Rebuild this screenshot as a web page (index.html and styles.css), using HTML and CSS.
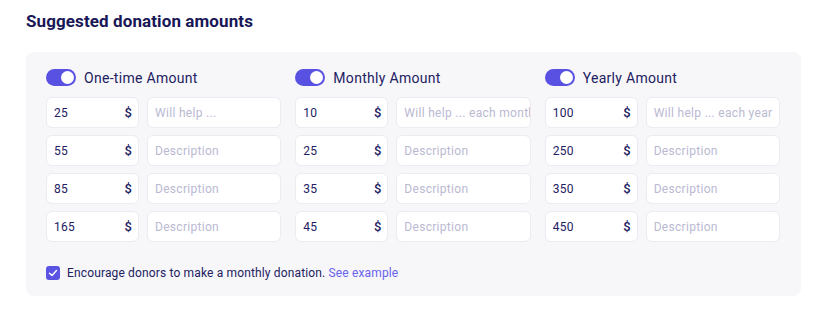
FILE: index.html
```html
<!DOCTYPE html>
<html>
<head>
<meta charset="utf-8">
<link rel="stylesheet" href="styles.css">
</head>
<body>
<div class="page">
  <h2 class="title">Suggested donation amounts</h2>
  <div class="panel">
    <div class="columns">
      <div class="col">
        <div class="col-head"><span class="toggle"><span class="knob"></span></span><span class="label">One-time Amount</span></div>
        <div class="row"><div class="amount"><span>25</span><span class="cur">$</span></div><div class="desc">Will help ...</div></div>
        <div class="row"><div class="amount"><span>55</span><span class="cur">$</span></div><div class="desc">Description</div></div>
        <div class="row"><div class="amount"><span>85</span><span class="cur">$</span></div><div class="desc">Description</div></div>
        <div class="row"><div class="amount"><span>165</span><span class="cur">$</span></div><div class="desc">Description</div></div>
      </div>
      <div class="col">
        <div class="col-head"><span class="toggle"><span class="knob"></span></span><span class="label">Monthly Amount</span></div>
        <div class="row"><div class="amount"><span>10</span><span class="cur">$</span></div><div class="desc">Will help ... each month</div></div>
        <div class="row"><div class="amount"><span>25</span><span class="cur">$</span></div><div class="desc">Description</div></div>
        <div class="row"><div class="amount"><span>35</span><span class="cur">$</span></div><div class="desc">Description</div></div>
        <div class="row"><div class="amount"><span>45</span><span class="cur">$</span></div><div class="desc">Description</div></div>
      </div>
      <div class="col">
        <div class="col-head"><span class="toggle"><span class="knob"></span></span><span class="label">Yearly Amount</span></div>
        <div class="row"><div class="amount"><span>100</span><span class="cur">$</span></div><div class="desc">Will help ... each year</div></div>
        <div class="row"><div class="amount"><span>250</span><span class="cur">$</span></div><div class="desc">Description</div></div>
        <div class="row"><div class="amount"><span>350</span><span class="cur">$</span></div><div class="desc">Description</div></div>
        <div class="row"><div class="amount"><span>450</span><span class="cur">$</span></div><div class="desc">Description</div></div>
      </div>
    </div>
    <div class="check-row">
      <span class="checkbox"><svg width="10" height="10" viewBox="0 0 10 10"><path d="M1.5 5.2 L4 7.5 L8.5 2.5" fill="none" stroke="#fff" stroke-width="1.4" stroke-linecap="round" stroke-linejoin="round"/></svg></span>
      <span class="check-text">Encourage donors to make a monthly donation. <a class="link">See example</a></span>
    </div>
  </div>
</div>
</body>
</html>
```

FILE: styles.css
```css
* { box-sizing: border-box; }
html, body { margin: 0; padding: 0; background: #ffffff; }
body { font-family: Roboto, "Noto Sans", sans-serif; color: #1d1b5c; }
.page { padding: 9px 24px 0 26px; }
.title {
  margin: 0;
  font-size: 17px;
  line-height: 24px;
  font-weight: 700;
  color: #191757;
  letter-spacing: 0.1px;
}
.panel {
  margin-top: 19px;
  background: #f7f7fa;
  border-radius: 8px;
  padding: 17px 21px 16px 20px;
}
.columns {
  display: grid;
  grid-template-columns: repeat(3, 1fr);
  column-gap: 14px;
}
.col { display: flex; flex-direction: column; gap: 7px; }
.col-head {
  display: flex;
  align-items: center;
  gap: 8px;
  height: 17px;
  margin-bottom: 4px;
}
.toggle {
  position: relative;
  width: 30px;
  height: 17px;
  border-radius: 9px;
  background: #5951e1;
  flex: none;
}
.knob {
  position: absolute;
  right: 2px;
  top: 2px;
  width: 13px;
  height: 13px;
  border-radius: 50%;
  background: #fff;
}
.label { font-size: 14px; color: #22205f; font-weight: 400; letter-spacing: 0.3px; }
.row {
  display: grid;
  grid-template-columns: 93px 1fr;
  gap: 8px;
  height: 31px;
}
.amount, .desc {
  background: #fff;
  border: 1px solid #ebebf1;
  border-radius: 6px;
  display: flex;
  align-items: center;
  font-size: 12px;
  padding: 0 7px 0 7px;
  white-space: nowrap;
  overflow: hidden;
  letter-spacing: 0.3px;
}
.amount { justify-content: space-between; color: #22205f; padding-right: 6px; }
.cur { font-size: 13px; font-weight: 500; color: #22205f; letter-spacing: 0; }
.desc { color: #bab9d2; }
.check-row {
  display: flex;
  align-items: center;
  gap: 7px;
  margin-top: 24px;
  height: 14px;
}
.checkbox {
  width: 14px;
  height: 14px;
  border-radius: 3px;
  background: #5b54e2;
  display: flex;
  align-items: center;
  justify-content: center;
  flex: none;
}
.check-text { font-size: 12px; color: #22205f; letter-spacing: 0.15px; }
.link { color: #6a62ea; }
```
